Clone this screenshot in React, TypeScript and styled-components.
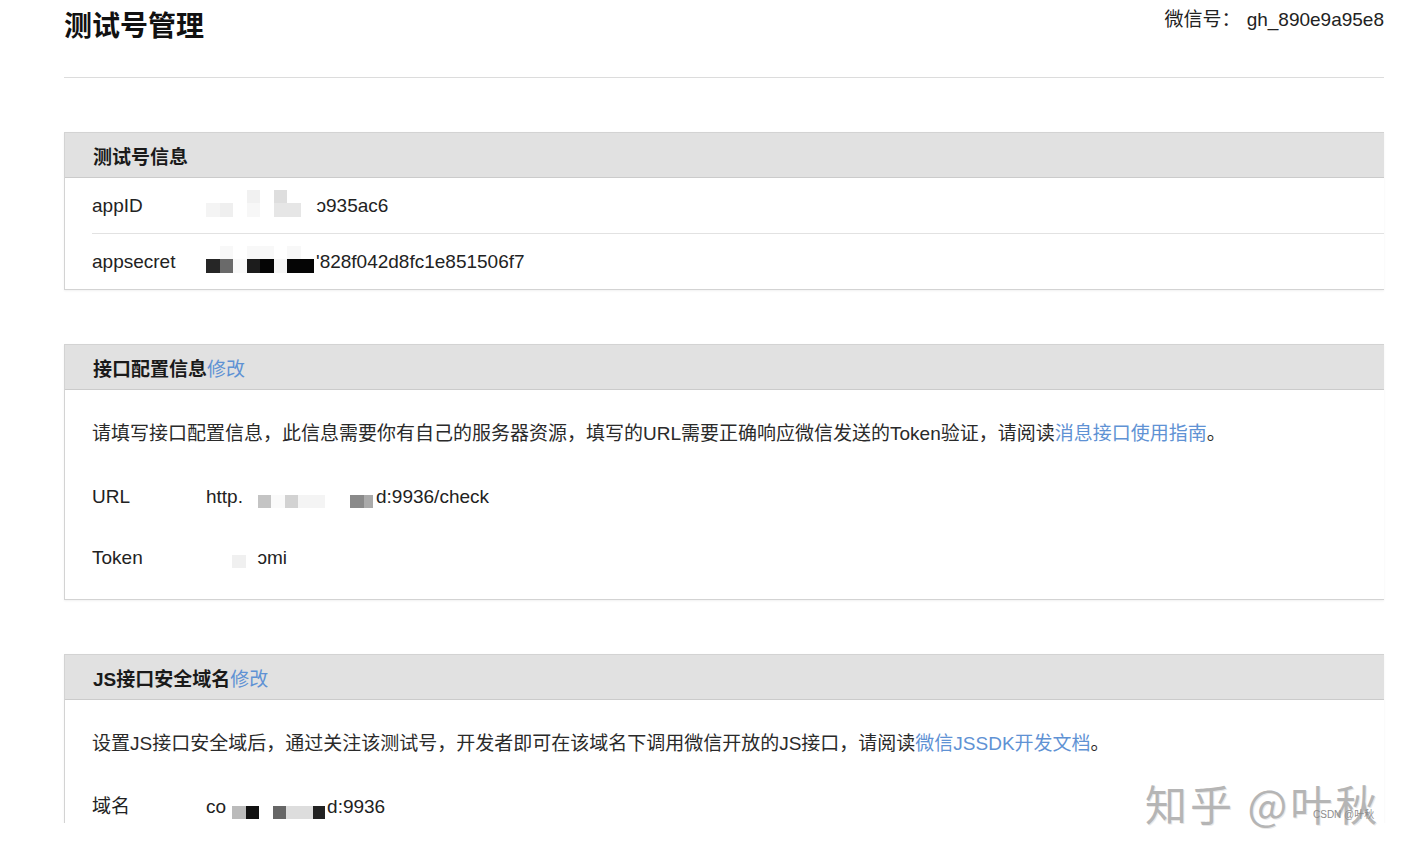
import styled, { createGlobalStyle } from "styled-components";

const GlobalStyle = createGlobalStyle`
  html, body {
    margin: 0;
    padding: 0;
    background: #fff;
  }
  body {
    font-family: "Liberation Sans", "Noto Sans CJK SC", sans-serif;
    color: #222;
  }
`;

const Screen = styled.div`
  position: relative;
  width: 1412px;
  height: 864px;
  overflow: hidden;
`;
const Viewport = styled.div`
  height: 823px;
  overflow: hidden;
  padding: 0 28px 0 64px;
`;
const TopBar = styled.div`
  display: flex;
  justify-content: space-between;
  align-items: flex-start;
  height: 78px;
  border-bottom: 1px solid #dcdcdc;
  box-sizing: border-box;
`;
const Title = styled.h1`
  margin: 7px 0 0;
  font-size: 28px;
  line-height: 40px;
  font-weight: 700;
  color: #111;
`;
const Account = styled.div`
  margin-top: 8px;
  font-size: 19px;
  line-height: 24px;
  color: #222;

  & span {
    margin-right: 6px;
  }
`;
const Panel = styled.section`
  margin-top: 54px;
  border: 1px solid #d3d3d3;
  border-right: none;
  box-shadow: 0 1px 2px rgba(0, 0, 0, 0.06);
  & + & {
    margin-top: 54px;
  }
`;
const PanelHead = styled.div`
  height: 44px;
  display: flex;
  align-items: center;
  padding-left: 28px;
  background: #e1e1e1;
  border-bottom: 1px solid #cbcbcb;
  font-size: 19px;
  font-weight: 700;
  color: #1a1a1a;
`;
const Link = styled.a`
  color: #5f92d4;
  font-weight: 400;
  text-decoration: none;
`;
const InfoRow = styled.div`
  display: grid;
  grid-template-columns: 114px 1fr;
  align-items: center;
  height: 55px;
  margin-left: 27px;
  font-size: 19px;
  line-height: 24px;
  & + & {
    border-top: 1px solid #e2e2e2;
  }
`;
const PanelBody = styled.div`
  padding: 32px 0 29px 27px;
  font-size: 19px;
  line-height: 24px;
`;
const Desc = styled.p`
  margin: 0;
  color: #2a2a2a;
`;
const Field = styled.div<{ $gap: number }>`
  display: grid;
  grid-template-columns: 114px 1fr;
  margin-top: ${(p) => p.$gap}px;
`;
const Value = styled.div`
  white-space: nowrap;
`;
const MosaicBox = styled.span<{ $drop: number; $lift: number }>`
  display: inline-block;
  vertical-align: ${(p) => -p.$drop}px;
  margin-top: ${(p) => -p.$lift}px;
`;
const MosaicRow = styled.div`
  display: flex;
`;
const Cell = styled.div<{ $c: string; $w: number }>`
  width: ${(p) => p.$w}px;
  height: 13.5px;
  background: ${(p) => p.$c};
`;
const Watermark = styled.div`
  position: absolute;
  left: 1145px;
  top: 776px;
  font-family: "Noto Sans CJK SC", sans-serif;
  font-size: 42px;
  line-height: 54px;
  color: #b5b5b5;
  letter-spacing: 3px;
  text-shadow: 1px 1px 0 #e8e8e8;
`;
const SmallMark = styled.div`
  position: absolute;
  left: 1313px;
  top: 806px;
  font-size: 10px;
  color: #8d8d8d;
`;

type CellDef = [string, number?];

function Mosaic({ rows, drop = 5 }: { rows: CellDef[][]; drop?: number }) {
  return (
    <MosaicBox $drop={drop} $lift={(rows.length - 1) * 13.5}>
      {rows.map((row, i) => (
        <MosaicRow key={i}>
          {row.map(([c, w], j) => (
            <Cell key={j} $c={c} $w={w ?? 13.5} />
          ))}
        </MosaicRow>
      ))}
    </MosaicBox>
  );
}

const T = "transparent";

function App() {
  return (
    <Screen>
      <GlobalStyle />
      <Viewport>
        <TopBar>
          <Title>测试号管理</Title>
          <Account>
            <span>微信号：</span>gh_890e9a95e8
          </Account>
        </TopBar>

        <Panel>
          <PanelHead>测试号信息</PanelHead>
          <InfoRow>
            <span>appID</span>
            <Value>
              <Mosaic
                rows={[
                  [[T], [T], [T], ["#f1f1f1"], [T], ["#dedede"], [T], [T, 16]],
                  [["#f4f4f4"], ["#efefef"], [T], ["#f7f7f7"], [T], ["#e6e6e6"], ["#e6e6e6"], [T, 16]],
                ]}
              />
              ɔ935ac6
            </Value>
          </InfoRow>
          <InfoRow>
            <span>appsecret</span>
            <Value>
              <Mosaic
                rows={[
                  [[T], ["#f8f8f8"], [T], ["#f8f8f8"], ["#f8f8f8"], [T], ["#f8f8f8"], [T, 14]],
                  [["#262626"], ["#6a6a6a"], ["#f9f9f9"], ["#1c1c1c"], ["#050505"], ["#f5f5f5"], ["#050505"], ["#050505", 13.5], [T, 2]],
                ]}
              />
              '828f042d8fc1e851506f7
            </Value>
          </InfoRow>
        </Panel>

        <Panel>
          <PanelHead>
            接口配置信息<Link>修改</Link>
          </PanelHead>
          <PanelBody>
            <Desc>
              请填写接口配置信息，此信息需要你有自己的服务器资源，填写的URL需要正确响应微信发送的Token验证，请阅读
              <Link>消息接口使用指南</Link>。
            </Desc>
            <Field $gap={39}>
              <span>URL</span>
              <Value>
                http.
                <Mosaic
                  rows={[
                    [
                      [T, 15],
                      ["#c4c4c4"],
                      ["#fafafa"],
                      ["#d2d2d2"],
                      ["#f4f4f4"],
                      ["#f4f4f4"],
                      [T, 25],
                      ["#8a8a8a"],
                      ["#aaaaaa", 9],
                      [T, 3],
                    ],
                  ]}
                />
                d:9936/check
              </Value>
            </Field>
            <Field $gap={37}>
              <span>Token</span>
              <Value>
                <Mosaic rows={[[[T, 26], ["#f0f0f0"], [T, 12]]]} drop={4} />
                ɔmi
              </Value>
            </Field>
          </PanelBody>
        </Panel>

        <Panel>
          <PanelHead>
            JS接口安全域名<Link>修改</Link>
          </PanelHead>
          <PanelBody>
            <Desc>
              设置JS接口安全域后，通过关注该测试号，开发者即可在该域名下调用微信开放的JS接口，请阅读
              <Link>微信JSSDK开发文档</Link>。
            </Desc>
            <Field $gap={39}>
              <span>域名</span>
              <Value>
                co
                <Mosaic
                  rows={[
                    [
                      [T, 6],
                      ["#bbbbbb"],
                      ["#111111"],
                      [T],
                      ["#666666"],
                      ["#dddddd"],
                      ["#dddddd"],
                      ["#222222", 12],
                      [T, 2],
                    ],
                  ]}
                  drop={6}
                />
                d:9936
              </Value>
            </Field>
          </PanelBody>
        </Panel>
      </Viewport>
      <Watermark>知乎 @叶秋</Watermark>
      <SmallMark>CSDN @叶秋</SmallMark>
    </Screen>
  );
}

export default App;
